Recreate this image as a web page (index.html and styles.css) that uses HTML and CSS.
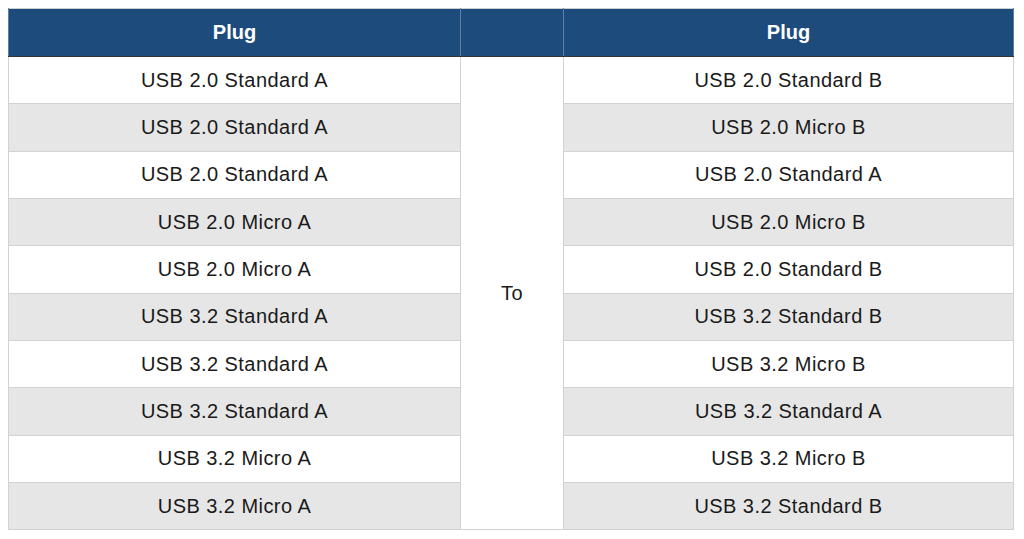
FILE: index.html
```html
<!DOCTYPE html>
<html>
<head>
<meta charset="utf-8">
<link rel="stylesheet" href="styles.css">
</head>
<body>
<table class="plugs">
  <colgroup>
    <col class="c-from">
    <col class="c-to">
    <col class="c-dest">
  </colgroup>
  <thead>
    <tr>
      <th>Plug</th>
      <th></th>
      <th>Plug</th>
    </tr>
  </thead>
  <tbody>
    <tr class="odd"><td>USB 2.0 Standard A</td><td class="to" rowspan="10">To</td><td>USB 2.0 Standard B</td></tr>
    <tr class="even"><td>USB 2.0 Standard A</td><td>USB 2.0 Micro B</td></tr>
    <tr class="odd"><td>USB 2.0 Standard A</td><td>USB 2.0 Standard A</td></tr>
    <tr class="even"><td>USB 2.0 Micro A</td><td>USB 2.0 Micro B</td></tr>
    <tr class="odd"><td>USB 2.0 Micro A</td><td>USB 2.0 Standard B</td></tr>
    <tr class="even"><td>USB 3.2 Standard A</td><td>USB 3.2 Standard B</td></tr>
    <tr class="odd"><td>USB 3.2 Standard A</td><td>USB 3.2 Micro B</td></tr>
    <tr class="even"><td>USB 3.2 Standard A</td><td>USB 3.2 Standard A</td></tr>
    <tr class="odd"><td>USB 3.2 Micro A</td><td>USB 3.2 Micro B</td></tr>
    <tr class="even"><td>USB 3.2 Micro A</td><td>USB 3.2 Standard B</td></tr>
  </tbody>
</table>
</body>
</html>
```
FILE: styles.css
```css
body {
  margin: 8px;
  background: #ffffff;
  font-family: "Liberation Sans", Arial, sans-serif;
}
.plugs {
  border-collapse: collapse;
  table-layout: fixed;
  width: 1005px;
  border: 1px solid #cfcfcf;
}
.c-from { width: 452px; }
.c-to { width: 103px; }
.c-dest { width: 450px; }
.plugs th {
  height: 47px;
  padding: 0;
  background: #1d4c7c;
  color: #ffffff;
  font-size: 20px;
  font-weight: bold;
  text-align: center;
  border-left: 1px solid #5f7fa3;
  border-right: 1px solid #5f7fa3;
  border-bottom: 1px solid #333333;
}
.plugs td {
  height: 46.33px;
  padding: 0;
  text-align: center;
  font-size: 20px;
  letter-spacing: 0.45px;
  color: #1a1a1a;
  border: 1px solid #d2d2d2;
}
.plugs tr.odd td { background: #ffffff; }
.plugs tr.even td { background: #e6e6e6; }
.plugs td.to { background: #ffffff; }
```
